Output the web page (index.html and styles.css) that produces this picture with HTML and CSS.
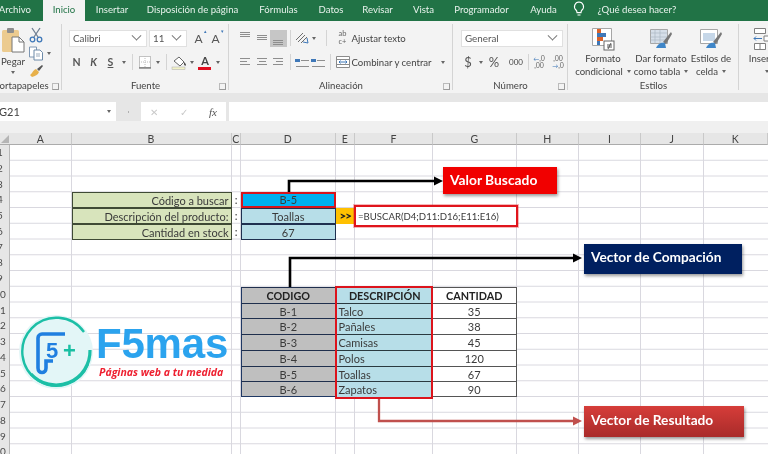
FILE: index.html
```html
<!DOCTYPE html>
<html lang="es">
<head>
<meta charset="utf-8">
<title>Función BUSCAR en Excel</title>
<link rel="stylesheet" href="styles.css">
</head>
<body>
<div class="app">
  <nav class="tabs">
    <span class="tab t-archivo">Archivo</span>
    <span class="tab t-inicio">Inicio</span>
    <span class="tab t-insertar">Insertar</span>
    <span class="tab t-disp">Disposición de página</span>
    <span class="tab t-form">Fórmulas</span>
    <span class="tab t-datos">Datos</span>
    <span class="tab t-rev">Revisar</span>
    <span class="tab t-vista">Vista</span>
    <span class="tab t-prog">Programador</span>
    <span class="tab t-ayuda">Ayuda</span>
    <svg class="bulb" viewBox="0 0 12 16"><path d="M6 1a4.600 4.600 0 0 0-3 8c.8.8 1 1.600 1 2.600h4c0-1 .2-1.800 1-2.600a4.600 4.600 0 0 0-3-8zM4.500 14h3" fill="none" stroke="#fff" stroke-width="1.100"/></svg>
    <span class="tab t-que">¿Qué desea hacer?</span>
  </nav>

  <section class="ribbon">
    <div class="group g-clip">
      <div class="body clip-body">
        <div class="paste">
          <svg class="paste-ico" viewBox="0 0 24 26"><rect x="1" y="3" width="17" height="22" rx="1.500" fill="#eccb8f"/><rect x="6" y="1" width="7" height="5" rx="1" fill="#8d8d8d"/><path d="M11 10h7l5 5v10H11z" fill="#fff" stroke="#777"/><path d="M18 10v5h5" fill="none" stroke="#777"/></svg>
          <span class="paste-text">Pegar</span>
          <span class="caret"></span>
        </div>
        <div class="clip-tools">
          <svg class="ico16" viewBox="0 0 16 16"><path d="M4 1l6 9M12 1L6 10" stroke="#6f7f92" stroke-width="1.300" fill="none"/><circle cx="4.500" cy="12.500" r="2.300" fill="none" stroke="#3f78b8" stroke-width="1.300"/><circle cx="11.500" cy="12.500" r="2.300" fill="none" stroke="#3f78b8" stroke-width="1.300"/></svg>
          <div class="with-caret"><svg class="ico16" viewBox="0 0 16 16"><path d="M1.500 2h7v10h-7z" fill="#fff" stroke="#7e97b3"/><path d="M6 5h6l2.500 2.500V15H6z" fill="#fff" stroke="#6d8aa8"/><path d="M8 9h4M8 11h4" stroke="#9ab"/></svg><span class="caret"></span></div>
          <svg class="ico16" viewBox="0 0 16 16"><path d="M9 6l5-4 1 1-4 5z" fill="#555"/><path d="M2 12c2-1 3-5 6-6l3 3c-1 3-4 4-7 5z" fill="#e7b04a"/></svg>
        </div>
      </div>
      <div class="label label-clip">Portapapeles<i class="launcher"></i></div>
    </div>

    <div class="group g-font">
      <div class="body">
        <div class="row r-fontsel">
          <div class="select s-font"><span>Calibri</span><i class="chev"></i></div>
          <div class="select s-size"><span>11</span><i class="chev"></i></div>
          <span class="tool grow">A<sup class="up">▴</sup></span>
          <span class="tool shrink">A<sup class="dn">▾</sup></span>
        </div>
        <div class="row r-fontfmt">
          <b class="tool w17 bi">N</b>
          <b class="tool w17 bi it">K</b>
          <b class="tool w17 bi un">S</b>
          <span class="slot-caret"><span class="caret"></span></span>
          <i class="sep s9"></i>
          <svg class="ico16" viewBox="0 0 16 16"><path d="M2.500 2.500h11v11h-11z" fill="#fff" stroke="#8c8c8c" stroke-dasharray="1 1"/><path d="M8 2v12M2 8h12" stroke="#bbb" stroke-dasharray="1 1"/><path d="M2 14h12" stroke="#555"/></svg>
          <span class="slot-caret"><span class="caret"></span></span>
          <i class="sep s9"></i>
          <svg class="ico16" viewBox="0 0 16 16"><path d="M3 7l5-4 5 5-4 4z" fill="#fff" stroke="#666"/><path d="M13 8c1 1 2 2 2 3s-2 1-2-1z" fill="#4a4a4a"/><rect x="1" y="13" width="13" height="2.500" fill="#f2f2c8" stroke="#aaa" stroke-width=".5"/></svg>
          <span class="slot-caret"><span class="caret"></span></span>
          <span class="tool w18 colora">A<i class="redbar"></i></span>
          <span class="slot-caret s8"><span class="caret"></span></span>
        </div>
      </div>
      <div class="label">Fuente<i class="launcher"></i></div>
    </div>

    <div class="group g-align">
      <div class="body">
        <div class="row r-align">
          <i class="lines top"></i><i class="lines mid"></i><i class="lines bot active"></i>
          <i class="sep s7"></i>
          <svg class="ico16" viewBox="0 0 16 16"><path d="M2 10l7-7M4 12l7-7M7 13l6-6" stroke="#6d6d6d" stroke-width="1" fill="none"/><path d="M9 12l5 1-1-5" stroke="#3f78b8" fill="none"/></svg>
          <span class="slot-caret s8"><span class="caret"></span></span>
          <i class="sep s17"></i>
          <span class="abc">ab<br>c+</span>
          <span class="cmd">Ajustar texto</span>
        </div>
        <div class="row r-align">
          <i class="lines left"></i><i class="lines center"></i><i class="lines right"></i>
          <i class="sep s7"></i>
          <i class="lines indent"></i><i class="lines indent"></i>
          <i class="sep s8"></i>
          <svg class="ico16" viewBox="0 0 16 16"><path d="M1.500 2.500h13v11h-13z" fill="#fff" stroke="#8b8b8b"/><path d="M1.500 5.500h13M1.500 10.500h13" stroke="#8b8b8b"/><path d="M4 8h8M4 8l1.500-1.500M4 8l1.500 1.500M12 8l-1.500-1.500M12 8l-1.500 1.500" stroke="#3f78b8" fill="none"/></svg>
          <span class="cmd cmd-wide">Combinar y centrar</span>
          <span class="caret"></span>
        </div>
      </div>
      <div class="label">Alineación<i class="launcher"></i></div>
    </div>

    <div class="group g-num">
      <div class="body">
        <div class="row r-gen"><div class="select s-gen"><span>General</span><i class="chev"></i></div></div>
        <div class="row r-numfmt">
          <span class="tool w16 big">$</span>
          <span class="slot-caret s10"><span class="caret"></span></span>
          <span class="tool w16 big">%</span>
          <span class="tool w20 tiny">000</span>
          <i class="sep s4"></i>
          <span class="tool w18 dec"><em>←</em>,0<br>,00</span>
          <span class="tool w20 dec">,00<br><em>→</em>,0</span>
        </div>
      </div>
      <div class="label">Número<i class="launcher"></i></div>
    </div>

    <div class="group g-styles">
      <div class="body styles-body">
        <div class="big-cmd c1">
          <svg class="ico24" viewBox="0 0 24 24"><path d="M1.500 1.500h19v17h-19z" fill="#fff" stroke="#a6a6a6"/><rect x="6" y="2" width="4" height="4" fill="#d9622b"/><rect x="6" y="6" width="9" height="4" fill="#3f78b8"/><rect x="6" y="10" width="6" height="4" fill="#d9622b"/><rect x="6" y="14" width="3" height="4" fill="#3f78b8"/><rect x="13" y="14" width="10" height="9" fill="#fff" stroke="#666"/><path d="M16 18h5M16 20h5M20 16l-3 6" stroke="#555" fill="none"/></svg>
          <span class="big-text">Formato<br>condicional<i class="caret inl"></i></span>
        </div>
        <div class="big-cmd c2">
          <svg class="ico24" viewBox="0 0 24 24"><path d="M1.500 2.500h17v14h-17z" fill="#d6dfe9" stroke="#a6a6a6"/><path d="M1.500 6h17M1.500 10h17M1.500 13h17M6 2.500v14M11 2.500v14" stroke="#aeb8c4" stroke-width=".7"/><path d="M14 15l8-10 1 2-6 10z" fill="#777"/><path d="M7 21c2-5 6-6 9-5l1 5z" fill="#3f86c8"/></svg>
          <span class="big-text">Dar formato<br>como tabla<i class="caret inl"></i></span>
        </div>
        <div class="big-cmd c3">
          <svg class="ico24" viewBox="0 0 24 24"><path d="M1.500 2.500h17v14h-17z" fill="#fff" stroke="#a6a6a6"/><rect x="4" y="6" width="12" height="8" fill="#c6d7e8"/><path d="M14 15l8-10 1 2-6 10z" fill="#777"/><path d="M7 21c2-5 6-6 9-5l1 5z" fill="#3f86c8"/></svg>
          <span class="big-text">Estilos de<br>celda<i class="caret inl"></i></span>
        </div>
      </div>
      <div class="label">Estilos</div>
    </div>

    <div class="group g-cells">
      <div class="body styles-body">
        <div class="big-cmd c4">
          <svg class="ico24" viewBox="0 0 24 24"><path d="M1.500 1.500h11v5h-11zM1.500 16.500h11v6h-11zM7 16.500v6" fill="#fff" stroke="#7f7f7f"/><path d="M1 11.500h8M3 9.500l-2 2 2 2" fill="none" stroke="#3f78b8"/><path d="M11 9h12v5H11z" fill="#fff" stroke="#7f7f7f"/></svg>
          <span class="big-text">Insertar<br><i class="caret inl"></i></span>
        </div>
      </div>
    </div>
  </section>

  <div class="strip"></div>

  <div class="formula-bar">
    <div class="namebox"><span>G21</span><i class="caret"></i></div>
    <div class="grip"></div>
    <div class="fx-box"><span class="fx-x">✕</span><span class="fx-ok">✓</span><em class="fx">fx</em></div>
    <div class="input"></div>
  </div>

  <div class="sheet">
    <div class="corner"></div>
    <div class="ch">A</div><div class="ch">B</div><div class="ch">C</div><div class="ch">D</div><div class="ch">E</div><div class="ch">F</div><div class="ch">G</div><div class="ch">H</div><div class="ch">I</div><div class="ch">J</div><div class="ch">K</div>

    <div class="rownums">
      <span>1</span><span>2</span><span>3</span><span>4</span><span>5</span><span>6</span><span>7</span><span>8</span><span>9</span><span>10</span><span>11</span><span>12</span><span>13</span><span>14</span><span>15</span><span>16</span><span>17</span><span>18</span><span>19</span><span>20</span>
    </div>

    <i class="vline cA"></i><i class="vline cB"></i><i class="vline cC"></i><i class="vline cD"></i><i class="vline cE"></i><i class="vline cF"></i><i class="vline cG"></i><i class="vline cH"></i><i class="vline cI"></i><i class="vline cJ"></i>

    <div class="cell lab cB r4">Código a buscar</div>
    <div class="cell lab cB r5">Descripción del producto:</div>
    <div class="cell lab cB r6">Cantidad en stock</div>
    <div class="cell mid cC r4">:</div>
    <div class="cell mid cC r5">:</div>
    <div class="cell mid cC r6">:</div>
    <div class="cell mid sel cD r4">B-5</div>
    <div class="cell mid val cD r5">Toallas</div>
    <div class="cell mid val cD r6">67</div>
    <div class="cell mid go cE r5">&gt;&gt;</div>
    <div class="cell formula cFG r5">=BUSCAR(D4;D11:D16;E11:E16)</div>

    <div class="cell mid code head cD r10">CODIGO</div>
    <div class="cell mid code cD r11">B-1</div>
    <div class="cell mid code cD r12">B-2</div>
    <div class="cell mid code cD r13">B-3</div>
    <div class="cell mid code cD r14">B-4</div>
    <div class="cell mid code cD r15">B-5</div>
    <div class="cell mid code cD r16">B-6</div>

    <div class="cell mid desc head cEF r10">DESCRIPCIÓN</div>
    <div class="cell desc cEF r11">Talco</div>
    <div class="cell desc cEF r12">Pañales</div>
    <div class="cell desc cEF r13">Camisas</div>
    <div class="cell desc cEF r14">Polos</div>
    <div class="cell desc cEF r15">Toallas</div>
    <div class="cell desc cEF r16">Zapatos</div>

    <div class="cell mid qty head cG r10">CANTIDAD</div>
    <div class="cell mid qty cG r11">35</div>
    <div class="cell mid qty cG r12">38</div>
    <div class="cell mid qty cG r13">45</div>
    <div class="cell mid qty cG r14">120</div>
    <div class="cell mid qty cG r15">67</div>
    <div class="cell mid qty cG r16">90</div>

    <div class="desc-frame"></div>

    <svg class="arrows" viewBox="0 133 768 321">
      <path d="M289 192v-11h146" fill="none" stroke="#000" stroke-width="2.600"/>
      <path d="M434 176.500l9 4.500-9 4.500z" fill="#000"/>
      <path d="M290 287v-29h285" fill="none" stroke="#000" stroke-width="2.600"/>
      <path d="M573 253.500l9 4.500-9 4.500z" fill="#000"/>
      <path d="M379 399v22h196" fill="none" stroke="#c0504d" stroke-width="2.300"/>
      <path d="M573 416.500l9 4.500-9 4.500z" fill="#c0504d"/>
    </svg>

    <div class="callout co-valor">Valor Buscado</div>
    <div class="callout co-vector">Vector de Compación</div>
    <div class="callout co-result">Vector de Resultado</div>

    <div class="logo">
      <svg class="logo-mark" viewBox="0 0 76 76">
        <circle cx="38" cy="38" r="37" fill="#e3f6f7"/>
        <path d="M66 18A34 34 0 1 0 70 50" fill="none" stroke="#1cbfa6" stroke-width="2.400"/>
        <path d="M13 60A34 34 0 0 0 72 36" fill="none" stroke="#1cbfa6" stroke-width="3.200"/>
        <path d="M47 20H24a4 4 0 0 0-4 4v30c0 6 8 6 8 0V47h7" fill="none" stroke="#1f7fe0" stroke-width="3.600"/>
        <text x="28" y="44" class="mark-five">5</text>
        <text x="45" y="44" class="mark-plus">+</text>
      </svg>
      <div class="logo-text">
        <div class="logo-name">F5mas</div>
        <div class="logo-tag">Páginas web a tu medida</div>
      </div>
    </div>
  </div>
</div>
</body>
</html>
```

FILE: styles.css
```css
* { box-sizing: border-box; }
html, body { margin: 0; padding: 0; }
body { width: 768px; height: 454px; overflow: hidden; background: #fff; }
.app { width: 768px; height: 454px; overflow: hidden; display: flex; flex-direction: column; font-family: Lato, "Liberation Sans", sans-serif; color: #444; filter: blur(.4px); }

/* tabs */
.tabs { height: 21px; flex: none; background: #217346; display: flex; align-items: stretch; font-size: 9.600px; color: #e8f2ec; position: relative; white-space: nowrap; }
.tab { display: flex; align-items: center; justify-content: center; padding-bottom: 2px; flex: none; }
.t-archivo { width: 31px; justify-content: flex-end; }
.t-inicio { width: 42px; margin-left: 12px; background: #f3f3f3; color: #217346; }
.t-insertar { width: 32px; margin-left: 11px; }
.t-disp { width: 91px; margin-left: 19px; }
.t-form { width: 39px; margin-left: 21px; }
.t-datos { width: 24px; margin-left: 21px; }
.t-rev { width: 29px; margin-left: 20px; }
.t-vista { width: 21px; margin-left: 21px; }
.t-prog { width: 55px; margin-left: 20px; }
.t-ayuda { width: 27px; margin-left: 21px; }
.t-que { width: 76px; margin-left: 14px; }
.bulb { width: 12px; height: 16px; margin: 1px 0 0 16px; flex: none; }

/* ribbon */
.ribbon { height: 72px; flex: none; background: #f3f3f3; display: flex; font-size: 9.600px; color: #444; overflow: hidden; }
.group { flex: none; display: flex; flex-direction: column; position: relative; }
.group::after { content: ""; position: absolute; right: 0; top: 3px; bottom: 3px; width: 1px; background: #d4d4d4; }
.g-clip { width: 62px; }
.g-font { width: 167px; }
.g-align { width: 224px; }
.g-num { width: 115px; }
.g-styles { width: 171px; }
.g-cells { width: 29px; }
.g-cells::after { display: none; }
.body { height: 58px; padding-top: 8px; flex: none; }
.label { height: 14px; flex: none; text-align: center; line-height: 13px; font-size: 9.600px; position: relative; white-space: nowrap; }
.label-clip { margin-left: -6px; text-align: left; }
.launcher { position: absolute; right: 3px; top: 4px; width: 7px; height: 7px; border: 1px solid #9a9a9a; border-top-color: #bbb; border-left-color: #bbb; }
.row { display: flex; align-items: center; height: 18px; margin-bottom: 6px; white-space: nowrap; }
.caret { display: inline-block; width: 0; height: 0; border: 2.200px solid transparent; border-top: 3px solid #666; border-bottom: 0; flex: none; }
.inl { margin-left: 4px; vertical-align: 2px; }
.slot-caret { width: 9px; flex: none; display: flex; justify-content: center; }
.s8 { width: 8px; }
.s10 { width: 10px; }
.sep { flex: none; display: block; height: 16px; background: linear-gradient(#d4d4d4, #d4d4d4) center / 1px 100% no-repeat; }
.s4 { width: 4px; }
.s7 { width: 7px; }
.s8.sep { width: 8px; }
.s9 { width: 9px; }
.s17 { width: 17px; }
.ico16 { width: 16px; height: 16px; flex: none; display: block; }
.ico24 { width: 24px; height: 24px; display: block; }
.tool { flex: none; text-align: center; display: block; }
.w16 { width: 16px; }
.w17 { width: 17px; }
.w18 { width: 18px; }
.w20 { width: 20px; }

/* clipboard */
.clip-body { padding-top: 6px; display: flex; }
.paste { width: 26px; display: flex; flex-direction: column; align-items: center; }
.paste-ico { width: 24px; height: 26px; display: block; }
.paste-text { line-height: 13px; margin-top: 2px; }
.paste .caret { margin-top: 3px; }
.clip-tools { margin-left: 2px; display: flex; flex-direction: column; gap: 2px; }
.with-caret { display: flex; align-items: center; gap: 3px; }

/* font */
.r-fontsel { padding-left: 7px; }
.r-fontfmt { padding-left: 6px; }
.select { height: 17px; background: #fff; border: 1px solid #e0e0e0; display: flex; align-items: center; justify-content: space-between; padding: 0 3px; flex: none; font-size: 9.800px; color: #555; }
.s-font { width: 78px; }
.s-size { width: 38px; margin-left: 2px; }
.s-gen { width: 102px; margin-left: 8px; }
.chev { width: 7px; height: 7px; border: solid #777; border-width: 0 1px 1px 0; transform: rotate(45deg) translate(-2px, -2px); margin-right: 3px; flex: none; }
.grow, .shrink { width: 17px; font-size: 12px; color: #555; position: relative; }
.grow { margin-left: 3px; }
.up, .dn { position: absolute; right: 0; top: -3px; font-size: 5px; color: #3f78b8; }
.bi { font-size: 10.500px; font-weight: 700; color: #555; }
.it { font-style: italic; }
.un { text-decoration: underline; }
.colora { font-weight: 700; font-size: 11px; color: #444; position: relative; line-height: 14px; height: 16px; }
.redbar { position: absolute; left: 2px; right: 3px; bottom: 0; height: 3px; background: #e00d1f; }

/* alignment */
.r-align { padding-left: 8px; }
.lines { flex: none; display: block; width: 16.500px; height: 16px; background-repeat: no-repeat; background-image: linear-gradient(#8e8e8e, #8e8e8e), linear-gradient(#8e8e8e, #8e8e8e), linear-gradient(#8e8e8e, #8e8e8e); }
.lines.top { background-size: 10px 1px; background-position: 3px 2px, 3px 4px, 3px 6px; }
.lines.mid { background-size: 10px 1px; background-position: 3px 5px, 3px 7px, 3px 9px; }
.lines.bot { background-size: 10px 1px; background-position: 3px 10px, 3px 12px, 3px 14px; }
.lines.active { background-color: #c6c6c6; height: 17px; }
.lines.left { background-size: 10px 1px, 7px 1px, 10px 1px; background-position: 3px 4px, 3px 7px, 3px 10px; }
.lines.center { background-size: 10px 1px, 7px 1px, 10px 1px; background-position: 3px 4px, 5px 7px, 3px 10px; }
.lines.right { background-size: 10px 1px, 7px 1px, 10px 1px; background-position: 3px 4px, 6px 7px, 3px 10px; }
.lines.indent { background-image: linear-gradient(#3f78b8, #3f78b8), linear-gradient(#8e8e8e, #8e8e8e), linear-gradient(#8e8e8e, #8e8e8e); background-size: 5px 3px, 8px 1px, 13px 1px; background-position: 1px 5px, 7px 6px, 2px 12px; }
.abc { width: 16px; flex: none; font-size: 7.500px; line-height: 8px; text-align: center; color: #666; }
.cmd { margin-left: 1px; flex: none; width: 60px; }
.cmd-wide { width: 89px; }

/* number */
.r-gen { margin-bottom: 6px; }
.r-numfmt { padding-left: 7px; }
.big { font-size: 13px; color: #555; }
.tiny { font-size: 8px; margin-left: 4px; }
.dec { font-size: 7px; line-height: 7px; color: #666; }
.dec em { color: #3f78b8; font-style: normal; font-size: 6px; }

/* styles */
.styles-body { padding-top: 6px; display: flex; }
.g-styles .styles-body { padding-left: 4px; }
.big-cmd { display: flex; flex-direction: column; align-items: center; flex: none; white-space: nowrap; }
.c1 { width: 62px; }
.c2 { width: 54px; }
.c3 { width: 46px; }
.c4 { width: 52px; }
.big-text { margin-top: 1px; line-height: 13px; text-align: center; font-size: 9.600px; display: block; }

/* bands */
.strip { height: 9px; flex: none; background: #e6e6e6; }
.formula-bar { height: 19px; flex: none; background: #e6e6e6; display: flex; }
.namebox { width: 116px; background: #fff; display: flex; align-items: center; justify-content: space-between; font-size: 11px; padding-right: 5px; flex: none; color: #444; }
.namebox span { margin-left: -1px; }
.grip { width: 25px; flex: none; background: radial-gradient(circle, #b0b0b0 .7px, transparent 1px) center / 3px 3.500px no-repeat; background-size: 3px 12px; }
.fx-box { width: 85px; flex: none; background: #fff; display: flex; align-items: center; justify-content: space-between; padding: 0 9px; color: #c9c9c9; font-size: 10px; }
.fx-x { width: 12px; }
.fx-ok { width: 12px; }
.fx { color: #555; font-family: "Liberation Serif", serif; font-size: 11px; }
.input { flex: 1; background: #fff; margin-left: 3px; }

/* sheet */
.sheet { flex: 1; position: relative; display: grid; overflow: hidden; padding-top: 12px; font-family: Lato, "Liberation Sans", sans-serif; font-size: 11px; color: #3a3a3a;
  grid-template-columns: 10px 61.500px 160px 9.500px 94.500px 19.500px 78px 83.500px 62.500px 62px 62.500px 1fr;
  grid-template-rows: 12px repeat(20, 15.750px);
  background: #f0f0f0;
}
.sheet::before { content: ""; position: absolute; left: 0; right: 0; top: 24px; bottom: 0; background-color: #fff;
  background-image: linear-gradient(transparent 14.750px, #d9d8df 14.750px);
  background-size: 100% 15.750px; }
.corner, .ch { grid-row: 1; background: #e6e6e6; border-bottom: 1px solid #ababab; position: relative; }
.corner::after { content: ""; position: absolute; right: 1px; bottom: 1px; border: 4px solid transparent; border-right-color: #b5b5b5; border-bottom-color: #b5b5b5; }
.ch { text-align: center; line-height: 12px; font-size: 10.500px; color: #444; border-right: 1px solid #c9c9c9; z-index: 1; }
.rownums { grid-column: 1; grid-row: 2 / -1; display: grid; grid-auto-rows: 15.750px; background: #e6e6e6; border-right: 1px solid #b8b8b8; overflow: hidden; z-index: 1; font-size: 10px; }
.rownums span { width: 16px; margin-left: -8px; text-align: center; line-height: 15.750px; white-space: nowrap; color: #4a4a4a; }
.vline { grid-row: 2 / -1; border-right: 1px solid #d9d8df; z-index: 0; display: block; }

.cA { grid-column: 2; } .cB { grid-column: 3; } .cC { grid-column: 4; } .cD { grid-column: 5; } .cE { grid-column: 6; } .cF { grid-column: 7; } .cG { grid-column: 8; } .cH { grid-column: 9; } .cI { grid-column: 10; } .cJ { grid-column: 11; }
.cFG { grid-column: 7 / 9; }
.cEF { grid-column: 6 / 8; }
.r4 { grid-row: 5; } .r5 { grid-row: 6; } .r6 { grid-row: 7; }
.r10 { grid-row: 11; } .r11 { grid-row: 12; } .r12 { grid-row: 13; } .r13 { grid-row: 14; } .r14 { grid-row: 15; } .r15 { grid-row: 16; } .r16 { grid-row: 17; }

.cell { z-index: 1; line-height: 15px; white-space: nowrap; padding: 0 2px; min-width: 0; }
.mid { text-align: center; }
.lab { background: #d8e4bc; border: 1px solid #3f4a35; text-align: right; }
.val { background: #b7dee8; border: 1px solid #1f3050; }
.sel { background: #00b0f0; border: 2px solid #d8141c; line-height: 12px; position: relative; z-index: 2; }
.go { background: #ffc000; font-weight: 900; color: #222; font-size: 11.500px; letter-spacing: -1px; padding: 0; }
.formula { background: #fff; font-size: 9.600px; line-height: 19px; box-shadow: 0 0 0 2px #e0141c, 0 0 0 3px rgba(224,20,28,.3); margin: -1px 1px; padding-left: 2px; z-index: 2; }
.code { background: #bfbfbf; border: 1px solid #1f2f4d; border-width: 1px 1px 0 1.500px; border-left-color: #1f3864; }
.code.r16 { border-bottom: 1.500px solid #1f3864; }
.head { font-weight: 700; color: #222; font-size: 10.800px; }
.desc { background: #b7dee8; border-top: 1px solid #2a3a40; padding-left: 3px; }
.qty { background: #fff; border: 1px solid #555; border-width: 1px 1px 0 0; }
.qty.r16 { border-bottom: 1px solid #555; }
.desc-frame { grid-column: 6 / 8; grid-row: 11 / 18; border: 2.500px solid #dc141c; z-index: 2; margin: -1px 0 -2px -1px; pointer-events: none; }

.arrows { position: absolute; left: 0; top: 12px; width: 768px; height: 321px; z-index: 3; }
.callout { position: absolute; z-index: 4; color: #fff; font-weight: 700; font-family: Lato, "Liberation Sans", sans-serif; display: flex; align-items: center; white-space: nowrap; box-shadow: 1px 2px 3px rgba(0,0,0,.4); }
.co-valor { left: 443px; top: 46px; width: 114px; height: 27px; background: #f10000; font-size: 13.800px; padding: 0 0 3px 7px; }
.co-vector { left: 584px; top: 123px; width: 158px; height: 30px; background: #002060; font-size: 13.700px; padding: 0 0 5px 7px; }
.co-result { left: 584px; top: 285px; width: 160px; height: 31px; background: linear-gradient(#d63d39, #a92b2a); font-size: 13.700px; padding: 0 0 5px 7px; }

.logo { position: absolute; left: 18px; top: 193px; z-index: 4; display: flex; align-items: center; }
.logo-mark { width: 76px; height: 76px; flex: none; display: block; }
.mark-five { font: 700 22px "Liberation Sans", sans-serif; fill: #1f7fe0; }
.mark-plus { font: 700 22px "Liberation Sans", sans-serif; fill: #19bfa3; }
.logo-text { margin-left: 2px; }
.logo-name { font: 700 42px/36px "Liberation Sans", sans-serif; color: #2ba3ee; letter-spacing: -.200px; }
.logo-tag { font: italic 700 10.500px/14px "Open Sans", sans-serif; color: #ee2030; margin: 3px 0 0 3px; white-space: nowrap; }
```
